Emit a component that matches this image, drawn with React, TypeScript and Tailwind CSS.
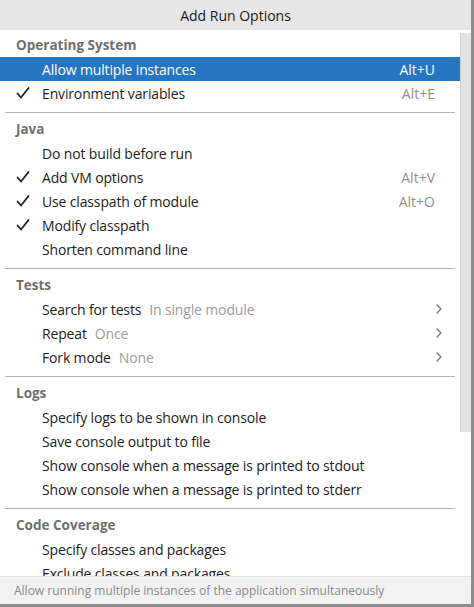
import React from "react";

type Item = {
  label: string;
  hint?: string;
  shortcut?: string;
  checked?: boolean;
  selected?: boolean;
  submenu?: boolean;
};

type Section = { title: string; items: Item[] };

const sections: Section[] = [
  {
    title: "Operating System",
    items: [
      { label: "Allow multiple instances", shortcut: "Alt+U", selected: true },
      { label: "Environment variables", shortcut: "Alt+E", checked: true },
    ],
  },
  {
    title: "Java",
    items: [
      { label: "Do not build before run" },
      { label: "Add VM options", shortcut: "Alt+V", checked: true },
      { label: "Use classpath of module", shortcut: "Alt+O", checked: true },
      { label: "Modify classpath", checked: true },
      { label: "Shorten command line" },
    ],
  },
  {
    title: "Tests",
    items: [
      { label: "Search for tests", hint: "In single module", submenu: true },
      { label: "Repeat", hint: "Once", submenu: true },
      { label: "Fork mode", hint: "None", submenu: true },
    ],
  },
  {
    title: "Logs",
    items: [
      { label: "Specify logs to be shown in console" },
      { label: "Save console output to file" },
      { label: "Show console when a message is printed to stdout" },
      { label: "Show console when a message is printed to stderr" },
    ],
  },
  {
    title: "Code Coverage",
    items: [
      { label: "Specify classes and packages" },
      { label: "Exclude classes and packages" },
    ],
  },
];

function Check() {
  return (
    <svg width="14" height="14" viewBox="0 0 14 14" fill="none">
      <path
        d="M1.5 7.5 L5 11.5 L12.5 2"
        stroke="#1f1f1f"
        strokeWidth="1.8"
        strokeLinecap="round"
        strokeLinejoin="round"
      />
    </svg>
  );
}

function Chevron() {
  return (
    <svg width="8" height="12" viewBox="0 0 8 12" fill="none">
      <path d="M1.5 1.5 L6 6 L1.5 10.5" stroke="#7a7a7a" strokeWidth="1.3" />
    </svg>
  );
}

function Row({ item }: { item: Item }) {
  return (
    <div
      className={
        item.selected
          ? "flex h-6 items-center bg-[#2675bf] text-white"
          : "flex h-6 items-center text-[#1c1c1c]"
      }
    >
      <div className="flex w-[42px] shrink-0 justify-end pr-[12px]">
        {item.checked && <Check />}
      </div>
      <span className="text-[14px] tracking-[-0.15px]">{item.label}</span>
      {item.hint && (
        <span className="ml-2 text-[14px] tracking-[-0.15px] text-[#9b9b9b]">
          {item.hint}
        </span>
      )}
      <div className="flex-1" />
      {item.shortcut && (
        <span
          className={
            item.selected
              ? "pr-[25px] text-[14px] text-white"
              : "pr-[25px] text-[14px] text-[#8f8f8f]"
          }
        >
          {item.shortcut}
        </span>
      )}
      {item.submenu && (
        <div className="pr-[17px]">
          <Chevron />
        </div>
      )}
    </div>
  );
}

export default function App() {
  return (
    <div
      className="flex h-[607px] w-[474px] flex-col overflow-hidden border-r-[3px] border-b-[3px] border-[#8c8c8c] bg-white"
      style={{ fontFamily: '"Open Sans", "Noto Sans", sans-serif' }}
    >
      <div className="flex h-[30px] shrink-0 items-center justify-center bg-[#e6e6e6] text-[14px] text-[#1a1a1a]">
        Add Run Options
      </div>

      <div className="flex min-h-0 flex-1">
        <div className="min-w-0 flex-1 overflow-hidden pt-[3px]">
          {sections.map((s, i) => (
            <div key={s.title} className={i > 0 ? "pt-[4px]" : ""}>
              <div className="flex h-6 items-center pl-[16px] text-[13.5px] font-bold text-[#6f6f6f]">
                {s.title}
              </div>
              {s.items.map((it) => (
                <Row key={it.label} item={it} />
              ))}
              <div className="mx-[5px] mt-[7px] h-px bg-[#b4b4b4]" />
            </div>
          ))}
        </div>
        <div className="w-[11px] shrink-0 pt-[3px]">
          <div className="h-[399px] border-l border-[#d0d0d0] bg-[#e2e2e2]" />
        </div>
      </div>

      <div className="flex h-[28px] shrink-0 items-center border-t border-[#e2e2e2] bg-[#f2f2f2] pl-[14px] text-[12px] text-[#8a8a8a]">
        Allow running multiple instances of the application simultaneously
      </div>
    </div>
  );
}
